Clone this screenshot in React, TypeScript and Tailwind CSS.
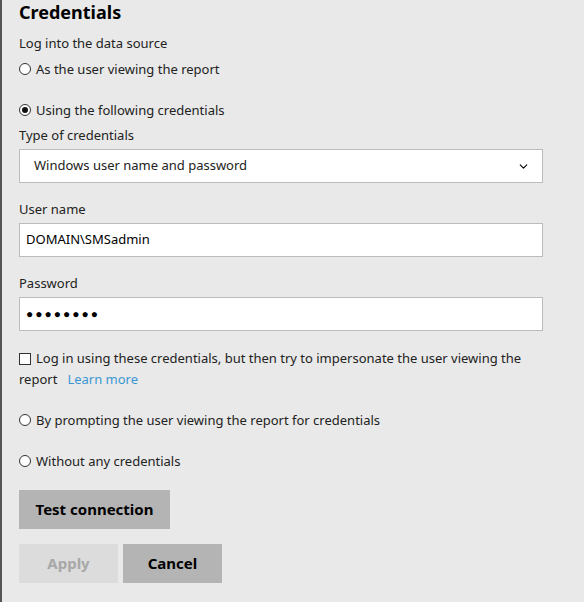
import { ChevronDown } from "lucide-react";

const Radio = ({ checked, label }: { checked?: boolean; label: string }) => (
  <label className="flex items-center gap-[5px]">
    <span className="w-[12px] h-[12px] rounded-full border border-[#333] bg-white flex items-center justify-center">
      {checked && <span className="w-[6px] h-[6px] rounded-full bg-[#111]" />}
    </span>
    <span>{label}</span>
  </label>
);

export default function App() {
  return (
    <div
      className="w-[584px] h-[602px] bg-[#e9e9e9] border-l-2 border-[#555] text-[13px] text-[#222] overflow-hidden"
      style={{ fontFamily: '"Noto Sans", "Open Sans", sans-serif' }}
    >
      <div className="pl-[17px] pr-[41px]">
        <h2 className="text-[18px] font-bold text-black leading-[24px] pt-0">Credentials</h2>
        <p className="mt-[10px] leading-[18px]">Log into the data source</p>
        <div className="mt-[8px] leading-[18px]">
          <Radio label="As the user viewing the report" />
        </div>
        <div className="mt-[23px] leading-[18px]">
          <Radio checked label="Using the following credentials" />
        </div>
        <p className="mt-[7px] leading-[18px]">Type of credentials</p>
        <div className="mt-[5px] h-[34px] bg-white border border-[#bcbcbc] flex items-center justify-between pl-[14px] pr-[12px]">
          <span>Windows user name and password</span>
          <ChevronDown size={13} strokeWidth={2} className="text-black" />
        </div>
        <p className="mt-[17px] leading-[18px]">User name</p>
        <div className="mt-[5px] h-[34px] bg-white border border-[#bcbcbc] flex items-center pl-[6px] text-black">
          DOMAIN\SMSadmin
        </div>
        <p className="mt-[17px] leading-[18px]">Password</p>
        <div className="mt-[5px] h-[34px] bg-white border border-[#bcbcbc] flex items-center pl-[6px] text-black tracking-[2px] text-[12px]">
          ●●●●●●●●
        </div>
        <div className="mt-[17px] leading-[21px]">
          <div className="flex items-center gap-[5px]">
            <span className="w-[12px] h-[12px] border border-[#333] bg-white" />
            <span>Log in using these credentials, but then try to impersonate the user viewing the</span>
          </div>
          <div className="flex gap-[10px]">
            <span>report</span>
            <a className="text-[#3b97d3]">Learn more</a>
          </div>
        </div>
        <div className="mt-[21px] leading-[18px]">
          <Radio label="By prompting the user viewing the report for credentials" />
        </div>
        <div className="mt-[23px] leading-[18px]">
          <Radio label="Without any credentials" />
        </div>
        <button className="mt-[20px] h-[39px] w-[151px] bg-[#b4b4b4] font-bold text-[15px] text-black block">
          Test connection
        </button>
        <div className="mt-[15px] flex gap-[5px]">
          <button className="h-[39px] w-[99px] bg-[#dcdcdc] font-bold text-[15px] text-[#a8a8a8]">Apply</button>
          <button className="h-[39px] w-[99px] bg-[#b4b4b4] font-bold text-[15px] text-black">Cancel</button>
        </div>
      </div>
    </div>
  );
}
